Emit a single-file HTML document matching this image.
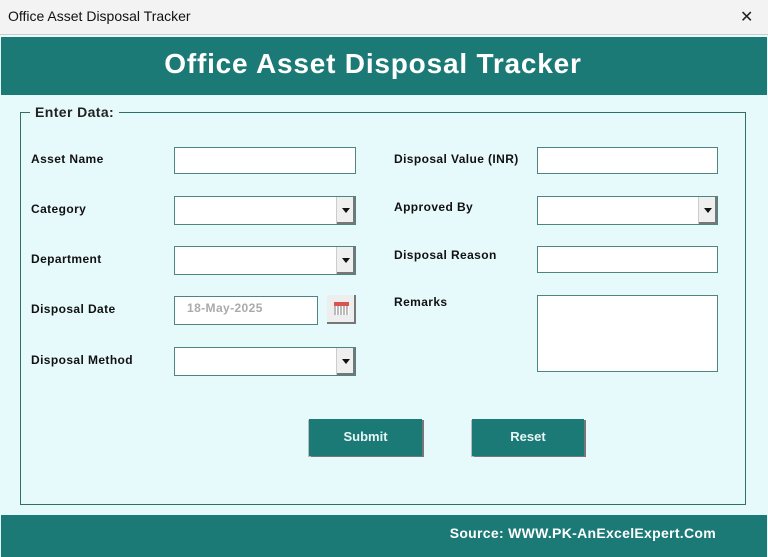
<!DOCTYPE html>
<html><head><style>
*{margin:0;padding:0;box-sizing:border-box}
body{width:768px;height:557px;position:relative;background:#e6fafb;font-family:"Liberation Sans",Arial,sans-serif;overflow:hidden}
.a{position:absolute}
.lbl{position:absolute;font-size:12px;font-weight:bold;color:#111;letter-spacing:0.4px}
.box{position:absolute;background:#fff;border:1px solid #4e8583}
.dd{position:absolute;right:0;top:0;bottom:0;width:19px;background:#efefef;border-left:1px solid #ccc;box-shadow:inset -2px -2px 0 #777}
.dd:after{content:"";position:absolute;left:5px;top:11px;border-left:4px solid transparent;border-right:4px solid transparent;border-top:5px solid #111}
.btn{position:absolute;background:#1b7a76;color:#e8f5f4;font-weight:bold;font-size:13px;text-align:center;line-height:36px;box-shadow:2px 1px 0 #777,-1px 1px 0 #bbb}
</style></head><body>
<div class="a" style="left:0;top:0;width:768px;height:35px;background:#f3f3f3;border-bottom:1px solid #ccc"></div>
<div class="a" style="left:8px;top:8px;font-size:14px;color:#111">Office Asset Disposal Tracker</div>
<div class="a" style="left:740px;top:7px;font-size:16px;color:#222">✕</div>
<div class="a" style="left:1px;top:37px;width:766px;height:58px;background:#1b7a76;color:#fff;font-weight:bold;font-size:28px;text-align:center;line-height:54px;letter-spacing:0.8px;padding-right:22px">Office Asset Disposal Tracker</div>
<div class="a" style="left:20px;top:112px;width:726px;height:393px;border:1px solid #2f6f6c"></div>
<div class="a" style="left:30px;top:104px;background:#e6fafb;padding:0 5px;font-size:14px;font-weight:bold;color:#222;letter-spacing:0.4px">Enter Data:</div>

<div class="lbl" style="left:31px;top:152px">Asset Name</div>
<div class="lbl" style="left:31px;top:202px">Category</div>
<div class="lbl" style="left:31px;top:252px">Department</div>
<div class="lbl" style="left:31px;top:302px">Disposal Date</div>
<div class="lbl" style="left:31px;top:353px">Disposal Method</div>
<div class="lbl" style="left:394px;top:152px">Disposal Value (INR)</div>
<div class="lbl" style="left:394px;top:200px">Approved By</div>
<div class="lbl" style="left:394px;top:248px">Disposal Reason</div>
<div class="lbl" style="left:394px;top:295px">Remarks</div>

<div class="box" style="left:174px;top:147px;width:182px;height:27px"></div>
<div class="box" style="left:174px;top:196px;width:182px;height:29px"><div class="dd"></div></div>
<div class="box" style="left:174px;top:246px;width:182px;height:29px"><div class="dd"></div></div>
<div class="box" style="left:174px;top:296px;width:144px;height:29px;color:#aaa;font-weight:bold;font-size:12px;padding:4px 0 0 12px;letter-spacing:0.4px">18-May-2025</div>
<div class="a" style="left:327px;top:295px;width:29px;height:29px;background:#eee;box-shadow:inset -2px -2px 0 #777">
 <div class="a" style="left:7px;top:7px;width:15px;height:4px;background:#d9534f"></div>
 <div class="a" style="left:7px;top:11px;width:15px;height:9px;background:repeating-linear-gradient(90deg,#bbb 0 2px,#fff 2px 3px)"></div>
</div>
<div class="box" style="left:174px;top:347px;width:182px;height:29px"><div class="dd"></div></div>

<div class="box" style="left:537px;top:147px;width:181px;height:27px"></div>
<div class="box" style="left:537px;top:196px;width:181px;height:29px"><div class="dd"></div></div>
<div class="box" style="left:537px;top:246px;width:181px;height:27px"></div>
<div class="box" style="left:537px;top:295px;width:181px;height:77px"></div>

<div class="btn" style="left:309px;top:419px;width:113px;height:37px">Submit</div>
<div class="btn" style="left:472px;top:419px;width:112px;height:37px">Reset</div>

<div class="a" style="left:1px;top:515px;width:766px;height:42px;background:#1b7a76;color:#fff;font-weight:bold;font-size:14px;text-align:right;padding:10px 51px 0 0;letter-spacing:0.3px">Source: WWW.PK-AnExcelExpert.Com</div>
</body></html>
